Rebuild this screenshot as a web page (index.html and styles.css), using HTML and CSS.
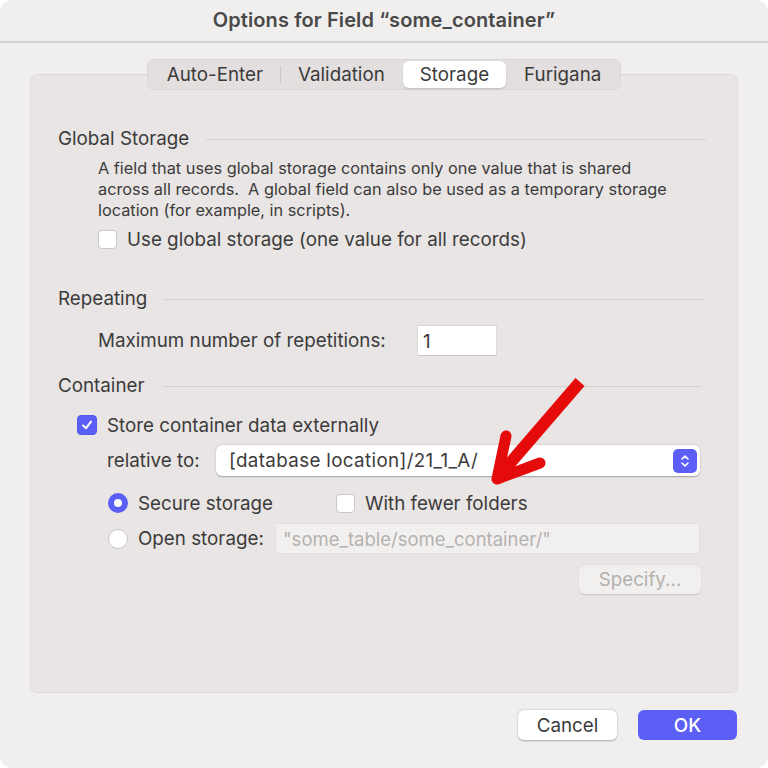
FILE: index.html
```html
<!DOCTYPE html>
<html lang="en">
<head>
    <meta charset="UTF-8">
    <title>Options for Field “some_container”</title>
    <link rel="stylesheet" href="styles.css">
</head>
<body>
    <div class="window">
        <div class="titlebar">Options for Field “some_container”</div>

        <div class="tabs">
            <span class="tab">Auto-Enter</span>
            <span class="tab-sep"></span>
            <span class="tab">Validation</span>
            <span class="tab selected">Storage</span>
            <span class="tab">Furigana</span>
        </div>

        <div class="panel">
            <!-- Global storage -->
            <div class="heading"><span>Global Storage</span><div class="rule"></div></div>
            <p class="desc">A field that uses global storage contains only one value that is shared<br>across all records.&nbsp; A global field can also be used as a temporary storage<br>location (for example, in scripts).</p>
            <div class="row check-row indent">
                <span class="checkbox"></span>
                <span>Use global storage (one value for all records)</span>
            </div>

            <!-- Repeating -->
            <div class="heading repeating"><span>Repeating</span><div class="rule"></div></div>
            <div class="row reps indent">
                <span class="reps-label">Maximum number of repetitions:</span>
                <span class="textbox">1</span>
            </div>

            <!-- Container -->
            <div class="heading container-head"><span>Container</span><div class="rule"></div></div>
            <div class="row store-row">
                <span class="checkbox checked">
                    <svg width="14" height="14" viewBox="0 0 14 14"><path d="M3 7.4 L5.9 10.3 L11 3.6" fill="none" stroke="#fff" stroke-width="2" stroke-linecap="round" stroke-linejoin="round"/></svg>
                </span>
                <span>Store container data externally</span>
            </div>
            <div class="row relative-row">
                <span class="relative-label">relative to:</span>
                <div class="select">
                    <span class="select-value">[database location]/21_1_A/</span>
                    <span class="stepper">
                        <svg width="12" height="16" viewBox="0 0 12 16"><path d="M3 6 L6 3 L9 6 M3 10 L6 13 L9 10" fill="none" stroke="#fff" stroke-width="1.6" stroke-linecap="round" stroke-linejoin="round"/></svg>
                    </span>
                </div>
            </div>
            <div class="row radio-row">
                <span class="radio on"></span>
                <span class="secure-label">Secure storage</span>
                <span class="checkbox"></span>
                <span>With fewer folders</span>
            </div>
            <div class="row radio-row open-row">
                <span class="radio"></span>
                <span class="open-label">Open storage:</span>
                <span class="field">"some_table/some_container/"</span>
            </div>
            <div class="specify-wrap">
                <span class="btn specify">Specify...</span>
            </div>
        </div>

        <div class="footer">
            <span class="btn cancel">Cancel</span>
            <span class="btn ok">OK</span>
        </div>

        <svg class="arrow" width="768" height="768" viewBox="0 0 768 768">
            <line x1="580" y1="382" x2="499" y2="476" stroke="#e60b0b" stroke-width="12"/>
            <polyline points="506,436 497,479 540,463" fill="none" stroke="#e60b0b" stroke-width="11" stroke-linecap="round" stroke-linejoin="round"/>
        </svg>
    </div>
</body>
</html>
```

FILE: styles.css
```css
body {
    margin: 0;
    padding: 0;
    background: #ffffff;
    font-family: 'Inter', 'Roboto', sans-serif;
    color: #3c3b3b;
}

.window {
    position: relative;
    width: 768px;
    height: 768px;
    background-color: #f1efee;
    border-radius: 12px;
    overflow: hidden;
    display: flex;
    flex-direction: column;
}

.titlebar {
    height: 41px;
    line-height: 41px;
    text-align: center;
    font-size: 20px;
    font-weight: 600;
    letter-spacing: 0.1px;
    color: #4a4949;
    border-bottom: 2px solid #d3d1d0;
}

.tabs {
    align-self: center;
    display: flex;
    align-items: center;
    height: 29px;
    margin-top: 16px;
    margin-bottom: -16px;
    padding: 0 2px;
    background-color: #e2dfde;
    border: 1px solid #d9d6d5;
    border-radius: 7px;
    position: relative;
    z-index: 1;
}

.tab {
    font-size: 18.8px;
    padding: 0 17px;
    line-height: 27px;
    color: #3c3b3b;
}

.tab-sep {
    width: 1px;
    height: 17px;
    background-color: #cbc8c7;
}

.tab.selected {
    background-color: #ffffff;
    border-radius: 6px;
    box-shadow: 0 1px 2px rgba(0, 0, 0, 0.15);
    padding: 0 17px;
    margin: 0 1px;
}

.panel {
    margin: 0 30px;
    height: 619px;
    box-sizing: border-box;
    padding: 54px 31px 0 27px;
    background-color: #e8e5e4;
    border: 1px solid #dddad9;
    border-radius: 7px;
}

.heading {
    display: flex;
    align-items: center;
    font-size: 18.8px;
    line-height: 20px;
}

.heading .rule {
    flex: 1;
    height: 1px;
    margin-left: 17px;
    background-color: #d3d0cf;
}

.desc {
    margin: 9px 0 0 40px;
    font-size: 16.3px;
    line-height: 21px;
    white-space: nowrap;
}

.row {
    display: flex;
    align-items: center;
    font-size: 18.8px;
}

.indent {
    margin-left: 40px;
}

.check-row {
    margin-top: 8px;
    height: 20px;
}

.checkbox {
    width: 19px;
    height: 19px;
    box-sizing: border-box;
    background-color: #ffffff;
    border: 1px solid #cac7c6;
    border-radius: 4px;
    margin-right: 10px;
    display: flex;
    align-items: center;
    justify-content: center;
    flex-shrink: 0;
}

.checkbox.checked {
    width: 20px;
    height: 20px;
    background-color: #5c5ff5;
    border-color: #5457ea;
}

.heading.repeating {
    margin-top: 40px;
    margin-right: 3px;
}

.reps {
    margin-top: 16px;
    height: 31px;
}

.reps-label {
    width: 319px;
}

.textbox {
    width: 80px;
    height: 31px;
    box-sizing: border-box;
    padding-left: 5px;
    line-height: 31px;
    background-color: #ffffff;
    border: 1px solid #dcd9d8;
    border-bottom-color: #c9c6c5;
}

.heading.container-head {
    margin-top: 20px;
    margin-right: 4px;
}

.store-row {
    margin-top: 19px;
    margin-left: 19px;
    height: 20px;
}

.relative-row {
    margin-top: 10px;
    margin-left: 49px;
    margin-right: 6px;
    height: 31px;
}

.relative-label {
    width: 109px;
}

.select {
    flex: 1;
    height: 31px;
    display: flex;
    align-items: center;
    justify-content: space-between;
    padding: 0 3px 0 13px;
    background-color: #ffffff;
    border-radius: 6px;
    box-shadow: 0 0.5px 1.5px rgba(0, 0, 0, 0.3);
}

.select-value {
    letter-spacing: 0.35px;
}

.stepper {
    width: 24px;
    height: 24px;
    background-color: #5c5ff5;
    border-radius: 5px;
    display: flex;
    align-items: center;
    justify-content: center;
}

.radio-row {
    margin-top: 17px;
    margin-left: 50px;
    margin-right: 6px;
    height: 20px;
}

.radio {
    width: 20px;
    height: 20px;
    box-sizing: border-box;
    border-radius: 50%;
    background-color: #ffffff;
    border: 1px solid #cac7c6;
    margin-right: 10px;
    flex-shrink: 0;
}

.radio.on {
    border: 6.5px solid #5c5ff5;
    background: #ffffff;
}

.secure-label {
    width: 198px;
}

.open-row {
    margin-top: 10px;
    height: 31px;
}

.open-label {
    width: 137px;
}

.field {
    flex: 1;
    height: 31px;
    box-sizing: border-box;
    line-height: 31px;
    padding-left: 7px;
    font-size: 18.5px;
    color: #b5b2b1;
    background-color: #f2f0ef;
    border: 1px solid #e2dfde;
}

.specify-wrap {
    display: flex;
    justify-content: flex-end;
    margin-top: 11px;
    margin-right: 5px;
}

.btn {
    display: flex;
    align-items: center;
    justify-content: center;
    height: 29px;
    border-radius: 6px;
    font-size: 18.8px;
}

.specify {
    width: 122px;
    color: #b3b0af;
    background-color: #f2f0ef;
    box-shadow: 0 0.5px 1.5px rgba(0, 0, 0, 0.12);
}

.footer {
    display: flex;
    justify-content: flex-end;
    gap: 21px;
    margin-top: 17px;
    padding-right: 31px;
}

.cancel,
.ok {
    width: 99px;
    height: 30px;
}

.cancel {
    background-color: #ffffff;
    box-shadow: 0 0.5px 2px rgba(0, 0, 0, 0.3);
}

.ok {
    color: #ffffff;
    background-color: #5c5ff5;
    font-weight: 500;
}

.arrow {
    position: absolute;
    left: 0;
    top: 0;
    pointer-events: none;
}
```
